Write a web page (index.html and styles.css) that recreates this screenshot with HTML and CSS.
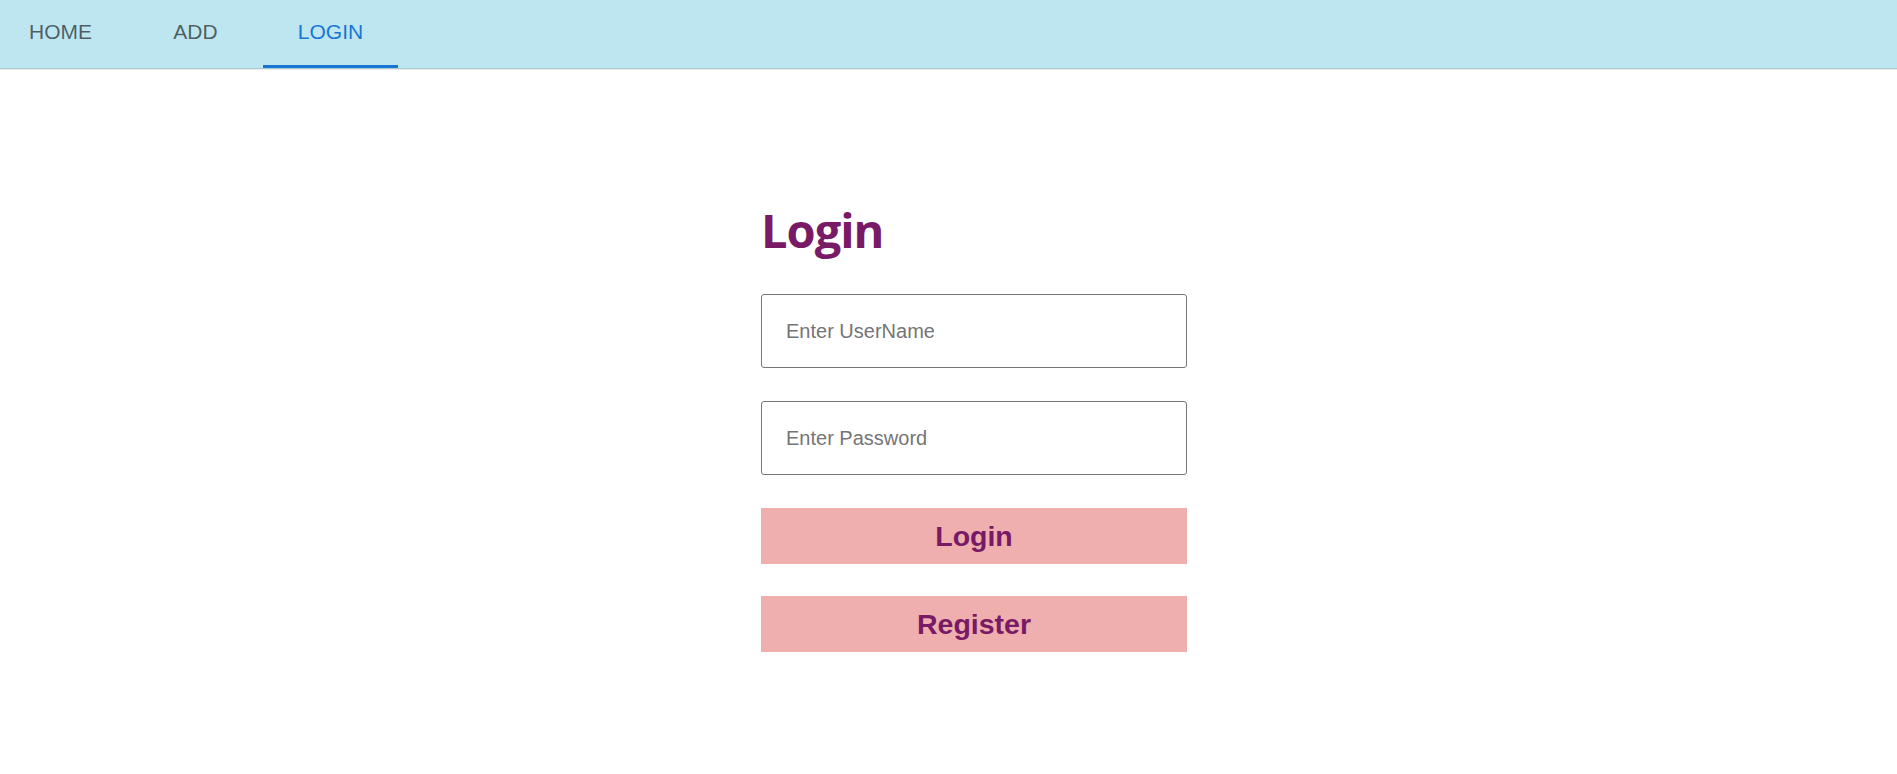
FILE: index.html
```html
<!DOCTYPE html>
<html lang="en">
<head>
<meta charset="utf-8">
<title>Login</title>
<link rel="stylesheet" href="styles.css">
</head>
<body>
<nav class="tabs">
  <a class="tab tab-first" href="#">HOME</a>
  <a class="tab" href="#">ADD</a>
  <a class="tab tab-active" href="#">LOGIN</a>
</nav>
<main class="page">
  <form class="login-form">
    <h1 class="title">Login</h1>
    <input class="field" type="text" placeholder="Enter UserName">
    <input class="field" type="password" placeholder="Enter Password">
    <button class="btn" type="button">Login</button>
    <button class="btn" type="button">Register</button>
  </form>
</main>
</body>
</html>
```

FILE: styles.css
```css
html, body {
  margin: 0;
  padding: 0;
  background: #ffffff;
}

body {
  font-family: "Liberation Sans", Arial, sans-serif;
}

.tabs {
  display: flex;
  height: 68px;
  background: #bee6f0;
  border-bottom: 1px solid #a8ccd6;
  box-shadow: 0 1px 1px rgba(0, 0, 0, 0.08);
}

.tab {
  box-sizing: border-box;
  width: 135px;
  height: 68px;
  padding-top: 21px;
  font-size: 21px;
  line-height: 21px;
  text-align: center;
  text-decoration: none;
  color: rgba(0, 0, 0, 0.6);
}

.tab-first {
  width: 128px;
  text-align: left;
  padding-left: 29px;
}

.tab-active {
  color: #1976d2;
  border-bottom: 3px solid #1976d2;
}

.page {
  display: flex;
  justify-content: center;
  padding-left: 51px;
}

.login-form {
  width: 426px;
  display: flex;
  flex-direction: column;
  padding-top: 138px;
}

.title {
  margin: 0 0 40px 0;
  font-family: "Open Sans", "Noto Sans", sans-serif;
  font-weight: 700;
  font-size: 47px;
  line-height: 47px;
  letter-spacing: -1px;
  color: #781a66;
}

.field {
  box-sizing: border-box;
  width: 426px;
  height: 74px;
  margin: 0 0 33px 0;
  padding: 0 24px;
  border: 1px solid #767676;
  border-radius: 3px;
  font-family: "Liberation Sans", Arial, sans-serif;
  font-size: 20px;
  color: #222;
  background: #fff;
  outline: none;
}

.field::placeholder {
  color: #757575;
  opacity: 1;
}

.btn {
  width: 426px;
  height: 56px;
  margin: 0 0 32px 0;
  padding: 0;
  border: none;
  background: #efafaf;
  font-family: "Liberation Sans", Arial, sans-serif;
  font-weight: 700;
  font-size: 28.5px;
  color: #781a66;
  cursor: pointer;
}
```
